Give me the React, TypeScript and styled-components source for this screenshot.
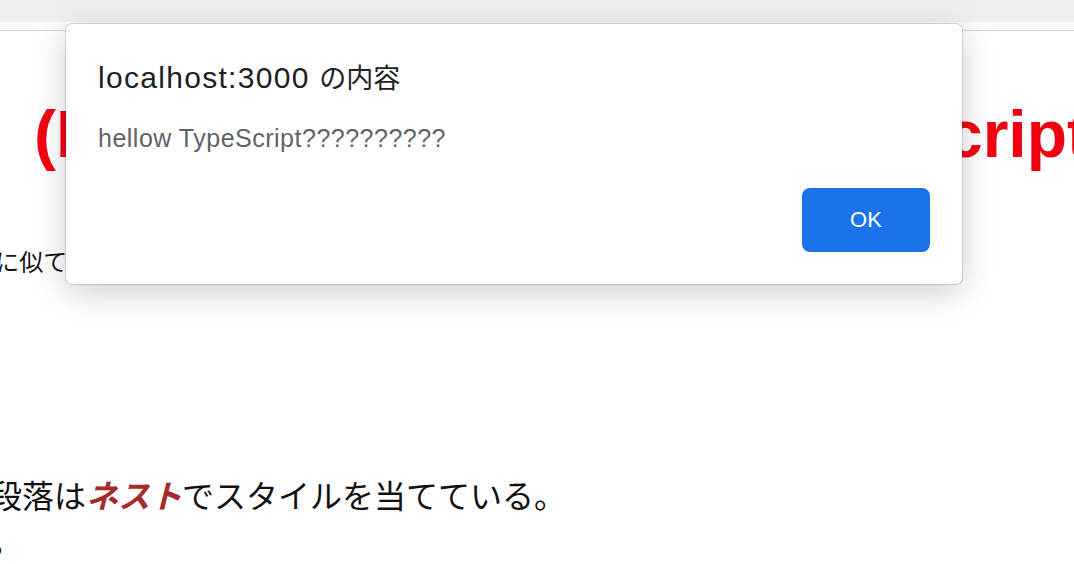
import React from 'react';
import styled, {createGlobalStyle} from 'styled-components';

const GlobalStyle = createGlobalStyle`
  html, body {
    margin: 0;
    padding: 0;
    background: #fff;
    overflow: hidden;
  }

  body {
    font-family: "Liberation Sans", "Noto Sans CJK JP", sans-serif;
    color: #111;
  }
`

const App: React.FC = () => {
    return (
        <Screen>
            <GlobalStyle/>
            <TabStrip/>
            <Toolbar/>
            <Page>
                <Heading>(React &amp; Styled を使う TypeScript)</Heading>
                <Note>CSSに似て書ける。</Note>
                <Paragraph>
                    この段落は<Nest>ネスト</Nest>でスタイルを当てている。
                    <br/>
                    以上。
                </Paragraph>
            </Page>
            <Dialog role="alertdialog">
                <DialogTitle>localhost:3000 <Suffix>の内容</Suffix></DialogTitle>
                <DialogMessage>hellow TypeScript??????????</DialogMessage>
                <Actions>
                    <OkButton>OK</OkButton>
                </Actions>
            </Dialog>
        </Screen>
    );
};

const Screen = styled.div`
  position: relative;
  width: 100%;
  height: 100vh;
  overflow: hidden;
`

const TabStrip = styled.div`
  height: 22px;
  background: linear-gradient(#eceef1, #f0f1f3);
`

const Toolbar = styled.div`
  height: 8px;
  background: #fbfbfc;
  border-bottom: 1px solid #d6d8db;
`

// the page is scrolled a little to the right, so its left edge is off screen
const Page = styled.main`
  margin-left: -74px;
  white-space: nowrap;
`

const Heading = styled.h1`
  margin: 65px 0 0;
  padding-left: 108px;
  font-size: 66px;
  line-height: 76px;
  font-weight: 700;
  color: #f20012;
`

const Note = styled.p`
  margin: 73px 0 0;
  padding-left: 20px;
  font-size: 24px;
  line-height: 36px;
`

const Paragraph = styled.p`
  margin: 194px 0 0;
  font-size: 32px;
  line-height: 45px;
`

const Nest = styled.span`
  font-weight: 700;
  font-style: italic;
  color: #a52a2a;
`

const Dialog = styled.section`
  position: absolute;
  top: 24px;
  left: 66px;
  width: 896px;
  height: 260px;
  box-sizing: border-box;
  padding: 37px 32px 32px;
  display: flex;
  flex-direction: column;
  background: #fff;
  border-radius: 6px;
  box-shadow: 0 0 0 1px rgba(0, 0, 0, 0.13), 0 8px 34px rgba(0, 0, 0, 0.2);
`

const DialogTitle = styled.div`
  font-size: 30px;
  line-height: 34px;
  letter-spacing: 1.3px;
  color: #202124;
`

const Suffix = styled.span`
  font-size: 27px;
  letter-spacing: 0;
`

const DialogMessage = styled.div`
  margin-top: 27px;
  font-size: 25px;
  line-height: 30px;
  letter-spacing: 0.5px;
  color: #5f6368;
`

const Actions = styled.div`
  margin-top: auto;
  display: flex;
  justify-content: flex-end;
`

const OkButton = styled.button`
  width: 128px;
  height: 64px;
  border: none;
  border-radius: 8px;
  background: #1a73e8;
  color: #fff;
  font-family: "Liberation Sans", sans-serif;
  font-size: 22px;
  cursor: pointer;
`

export default App;
